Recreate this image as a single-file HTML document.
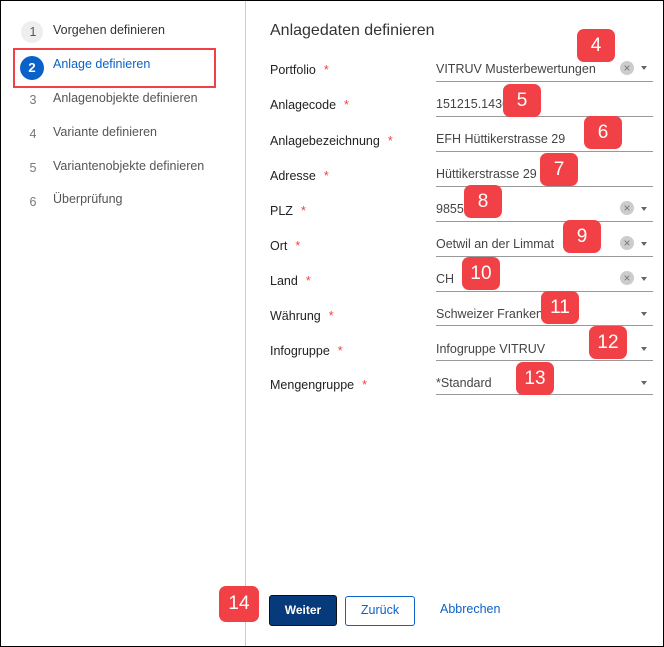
<!DOCTYPE html><html><head><style>
body{margin:0;width:664px;height:647px;font-family:"Liberation Sans",sans-serif;position:relative;overflow:hidden;background:#fff}
.frame{position:absolute;left:0;top:0;width:662px;height:645px;border:1px solid #000}
.div{position:absolute;left:245px;top:1px;width:1px;height:645px;background:#ccc}
.step{position:absolute;left:53px;font-size:12.5px;color:#555}
.num{position:absolute;left:22px;width:22px;text-align:center;font-size:12.5px;color:#555}
.lab{position:absolute;left:270px;font-size:12.5px;color:#222;margin-top:2px}
.lab b{color:#e44;font-weight:normal;margin-left:8px}
.val{position:absolute;left:436px;font-size:12.5px;color:#444;margin-top:2px}
.ul{position:absolute;left:436px;width:217px;height:1px;background:#999}
.x{position:absolute;left:620px;width:14px;height:14px;border-radius:50%;background:#ccc;color:#777;font-size:12px;line-height:14px;text-align:center}
.ar{position:absolute;left:641px;width:0;height:0;border-left:3.5px solid transparent;border-right:3.5px solid transparent;border-top:4px solid #666}
.bd{position:absolute;width:38px;height:33px;background:#f24146;border-radius:7px;color:#fff;font-size:19px;text-align:center;line-height:33px}
</style></head><body>
<div class="frame"></div><div class="div"></div>
<div style="position:absolute;left:21px;top:21px;width:22px;height:22px;border-radius:50%;background:#eee"></div>
<div class="num" style="top:25px">1</div><div class="step" style="top:23px;color:#333">Vorgehen definieren</div>
<div style="position:absolute;left:13px;top:48px;width:199px;height:36px;border:2px solid #f24146"></div>
<div style="position:absolute;left:20px;top:56px;width:24px;height:24px;border-radius:50%;background:#0a62c8;color:#fff;font-weight:bold;font-size:13px;text-align:center;line-height:24px">2</div>
<div class="step" style="top:57px;color:#0a62c8">Anlage definieren</div>
<div class="num" style="top:93px;color:#777">3</div><div class="step" style="top:91px">Anlagenobjekte definieren</div>
<div class="num" style="top:127px;color:#777">4</div><div class="step" style="top:125px">Variante definieren</div>
<div class="num" style="top:161px;color:#777">5</div><div class="step" style="top:159px">Variantenobjekte definieren</div>
<div class="num" style="top:195px;color:#777">6</div><div class="step" style="top:192px">Überprüfung</div>
<div style="position:absolute;left:270px;top:22px;font-size:16px;color:#333">Anlagedaten definieren</div>

<div class="lab" style="top:61px">Portfolio<b>*</b></div><div class="val" style="top:60px">VITRUV Musterbewertungen</div><div class="ul" style="top:81px"></div><div class="x" style="top:61px">×</div><div class="ar" style="top:66px"></div>
<div class="lab" style="top:96px">Anlagecode<b>*</b></div><div class="val" style="top:95px">151215.1436</div><div class="ul" style="top:116px"></div>
<div class="lab" style="top:132px">Anlagebezeichnung<b>*</b></div><div class="val" style="top:130px">EFH Hüttikerstrasse 29</div><div class="ul" style="top:151px"></div>
<div class="lab" style="top:167px">Adresse<b>*</b></div><div class="val" style="top:165px">Hüttikerstrasse 29</div><div class="ul" style="top:186px"></div>
<div class="lab" style="top:202px">PLZ<b>*</b></div><div class="val" style="top:200px">9855</div><div class="ul" style="top:221px"></div><div class="x" style="top:201px">×</div><div class="ar" style="top:207px"></div>
<div class="lab" style="top:237px">Ort<b>*</b></div><div class="val" style="top:235px">Oetwil an der Limmat</div><div class="ul" style="top:256px"></div><div class="x" style="top:236px">×</div><div class="ar" style="top:242px"></div>
<div class="lab" style="top:272px">Land<b>*</b></div><div class="val" style="top:270px">CH</div><div class="ul" style="top:291px"></div><div class="x" style="top:271px">×</div><div class="ar" style="top:277px"></div>
<div class="lab" style="top:307px">Währung<b>*</b></div><div class="val" style="top:305px">Schweizer Franken</div><div class="ul" style="top:325px"></div><div class="ar" style="top:312px"></div>
<div class="lab" style="top:342px">Infogruppe<b>*</b></div><div class="val" style="top:340px">Infogruppe VITRUV</div><div class="ul" style="top:360px"></div><div class="ar" style="top:347px"></div>
<div class="lab" style="top:376px">Mengengruppe<b>*</b></div><div class="val" style="top:374px">*Standard</div><div class="ul" style="top:394px"></div><div class="ar" style="top:381px"></div>

<div class="bd" style="left:577px;top:29px">4</div>
<div class="bd" style="left:503px;top:84px">5</div>
<div class="bd" style="left:584px;top:116px">6</div>
<div class="bd" style="left:540px;top:153px">7</div>
<div class="bd" style="left:464px;top:185px">8</div>
<div class="bd" style="left:563px;top:220px">9</div>
<div class="bd" style="left:462px;top:257px">10</div>
<div class="bd" style="left:541px;top:291px">11</div>
<div class="bd" style="left:589px;top:326px">12</div>
<div class="bd" style="left:516px;top:362px">13</div>
<div class="bd" style="left:219px;top:586px;width:40px;height:36px;line-height:36px">14</div>

<div style="position:absolute;left:269px;top:595px;width:66px;height:29px;background:#073a7a;border:1px solid #111;border-radius:3px;color:#fff;font-weight:bold;font-size:12px;text-align:center;line-height:29px">Weiter</div>
<div style="position:absolute;left:345px;top:596px;width:68px;height:28px;border:1px solid #0a62c8;border-radius:3px;color:#0a62c8;font-size:12.5px;text-align:center;line-height:27px">Zurück</div>
<div style="position:absolute;left:440px;top:602px;color:#0a62c8;font-size:12.5px">Abbrechen</div>
</body></html>
